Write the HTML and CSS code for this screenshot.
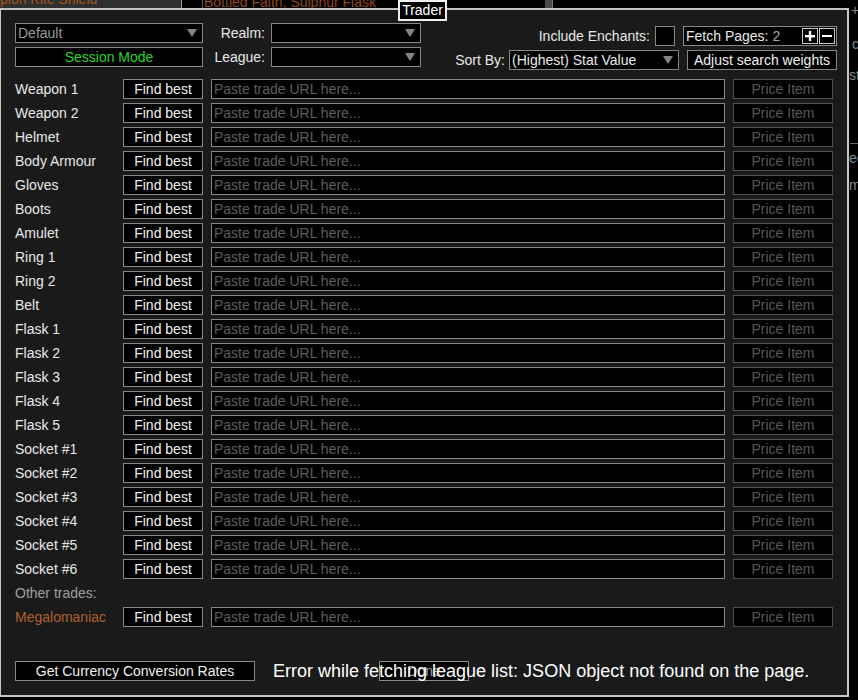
FILE: index.html
```html
<!DOCTYPE html>
<html>
<head>
<meta charset="utf-8">
<title>Trader</title>
<link rel="stylesheet" href="styles.css">
</head>
<body>
<div class="backdrop">
  <div class="bg-shield"><span>pion Kite Shield</span></div>
  <div class="bg-vline"></div>
  <div class="bg-flask">Bottled Faith, Sulphur Flask</div>
  <div class="bg-thumb"></div>
  <div class="bg-frag f1">+V</div>
  <div class="bg-frag f2">c</div>
  <div class="bg-frag f3">st</div>
  <div class="bg-hline"></div>
  <div class="bg-frag f4">ee</div>
  <div class="bg-frag f5">m</div>
</div>

<div class="dialog">
  <div class="title">Trader</div>

  <div class="top">
    <div class="top-left">
      <div class="dropdown"><span class="dd-text muted">Default</span><svg class="tri" viewBox="0 0 10 8"><polygon points="0,0 10,0 5,8"/></svg></div>
      <div class="lbl">Realm:</div>
      <div class="dropdown"><span class="dd-text"></span><svg class="tri" viewBox="0 0 10 8"><polygon points="0,0 10,0 5,8"/></svg></div>
      <div class="btn session">Session Mode</div>
      <div class="lbl">League:</div>
      <div class="dropdown"><span class="dd-text"></span><svg class="tri" viewBox="0 0 10 8"><polygon points="0,0 10,0 5,8"/></svg></div>
    </div>
    <div class="top-right">
      <div class="tr-row">
        <span class="lbl-inline">Include Enchants:</span>
        <div class="checkbox"></div>
        <div class="fetch">
          <span class="fetch-text">Fetch Pages: <span class="fetch-num">2</span></span>
          <div class="pm"><svg viewBox="0 0 14 14"><rect x="2" y="6" width="10" height="2.4"/><rect x="5.8" y="2" width="2.4" height="10"/></svg></div>
          <div class="pm"><svg viewBox="0 0 14 14"><rect x="2" y="6" width="10" height="2"/></svg></div>
        </div>
      </div>
      <div class="tr-row">
        <span class="lbl-inline sort">Sort By:</span>
        <div class="dropdown sortdd"><span class="dd-text">(Highest) Stat Value</span><svg class="tri" viewBox="0 0 10 8"><polygon points="0,0 10,0 5,8"/></svg></div>
        <div class="btn adjust">Adjust search weights</div>
      </div>
    </div>
  </div>

  <div class="rows">
    <div class="row"><span class="slot">Weapon 1</span><div class="btn find">Find best</div><div class="url">Paste trade URL here...</div><div class="btn price">Price Item</div></div>
    <div class="row"><span class="slot">Weapon 2</span><div class="btn find">Find best</div><div class="url">Paste trade URL here...</div><div class="btn price">Price Item</div></div>
    <div class="row"><span class="slot">Helmet</span><div class="btn find">Find best</div><div class="url">Paste trade URL here...</div><div class="btn price">Price Item</div></div>
    <div class="row"><span class="slot">Body Armour</span><div class="btn find">Find best</div><div class="url">Paste trade URL here...</div><div class="btn price">Price Item</div></div>
    <div class="row"><span class="slot">Gloves</span><div class="btn find">Find best</div><div class="url">Paste trade URL here...</div><div class="btn price">Price Item</div></div>
    <div class="row"><span class="slot">Boots</span><div class="btn find">Find best</div><div class="url">Paste trade URL here...</div><div class="btn price">Price Item</div></div>
    <div class="row"><span class="slot">Amulet</span><div class="btn find">Find best</div><div class="url">Paste trade URL here...</div><div class="btn price">Price Item</div></div>
    <div class="row"><span class="slot">Ring 1</span><div class="btn find">Find best</div><div class="url">Paste trade URL here...</div><div class="btn price">Price Item</div></div>
    <div class="row"><span class="slot">Ring 2</span><div class="btn find">Find best</div><div class="url">Paste trade URL here...</div><div class="btn price">Price Item</div></div>
    <div class="row"><span class="slot">Belt</span><div class="btn find">Find best</div><div class="url">Paste trade URL here...</div><div class="btn price">Price Item</div></div>
    <div class="row"><span class="slot">Flask 1</span><div class="btn find">Find best</div><div class="url">Paste trade URL here...</div><div class="btn price">Price Item</div></div>
    <div class="row"><span class="slot">Flask 2</span><div class="btn find">Find best</div><div class="url">Paste trade URL here...</div><div class="btn price">Price Item</div></div>
    <div class="row"><span class="slot">Flask 3</span><div class="btn find">Find best</div><div class="url">Paste trade URL here...</div><div class="btn price">Price Item</div></div>
    <div class="row"><span class="slot">Flask 4</span><div class="btn find">Find best</div><div class="url">Paste trade URL here...</div><div class="btn price">Price Item</div></div>
    <div class="row"><span class="slot">Flask 5</span><div class="btn find">Find best</div><div class="url">Paste trade URL here...</div><div class="btn price">Price Item</div></div>
    <div class="row"><span class="slot">Socket #1</span><div class="btn find">Find best</div><div class="url">Paste trade URL here...</div><div class="btn price">Price Item</div></div>
    <div class="row"><span class="slot">Socket #2</span><div class="btn find">Find best</div><div class="url">Paste trade URL here...</div><div class="btn price">Price Item</div></div>
    <div class="row"><span class="slot">Socket #3</span><div class="btn find">Find best</div><div class="url">Paste trade URL here...</div><div class="btn price">Price Item</div></div>
    <div class="row"><span class="slot">Socket #4</span><div class="btn find">Find best</div><div class="url">Paste trade URL here...</div><div class="btn price">Price Item</div></div>
    <div class="row"><span class="slot">Socket #5</span><div class="btn find">Find best</div><div class="url">Paste trade URL here...</div><div class="btn price">Price Item</div></div>
    <div class="row"><span class="slot">Socket #6</span><div class="btn find">Find best</div><div class="url">Paste trade URL here...</div><div class="btn price">Price Item</div></div>
    <div class="row"><span class="slot other">Other trades:</span></div>
    <div class="row"><span class="slot unique">Megalomaniac</span><div class="btn find">Find best</div><div class="url">Paste trade URL here...</div><div class="btn price">Price Item</div></div>
  </div>

  <div class="bottom">
    <div class="btn currency">Get Currency Conversion Rates</div>
    <div class="btn done">Done</div>
    <div class="error">Error while fetching league list: JSON object not found on the page.</div>
  </div>
</div>
</body>
</html>
```

FILE: styles.css
```css
* { box-sizing: border-box; }
html, body {
  margin: 0;
  padding: 0;
  background: #000;
  width: 858px;
  height: 700px;
  overflow: hidden;
}
body {
  position: relative;
  font-family: "Liberation Sans", Arial, sans-serif;
  font-size: 14px;
  color: #e8e8e8;
}

/* backdrop (application behind the popup) */
.backdrop { position: absolute; left: 0; top: 0; width: 858px; height: 700px; }
.bg-shield {
  position: absolute; left: 0; top: 0; width: 182px; height: 8px;
  background: #2f2f2f; border-right: 1px solid #9a9a9a; overflow: hidden;
}
.bg-shield span { position: absolute; left: 0; top: -9px; color: #a5531c; white-space: nowrap; }
.bg-vline { position: absolute; left: 202px; top: 0; width: 1px; height: 8px; background: #555; }
.bg-flask { position: absolute; left: 204px; top: -6px; color: #8f4716; white-space: nowrap; }
.bg-thumb { position: absolute; left: 545px; top: 0; width: 8px; height: 8px; background: #4a4a4a; border-right: 1px solid #777; }
.bg-frag { position: absolute; left: 851px; color: #8a8a8a; white-space: nowrap; }
.f1 { top: 2px; }
.f2 { top: 36px; left: 852px; }
.f3 { top: 67px; left: 849px; }
.f4 { top: 150px; left: 849px; }
.f5 { top: 177px; left: 849px; }
.bg-hline { position: absolute; left: 850px; top: 143px; width: 8px; height: 1px; background: #666; }

/* popup */
.dialog {
  position: absolute;
  left: -1px; top: 8px;
  width: 850px; height: 689px;
  background: #1a1a1a;
  border: 2px solid #c4c4c4;
  padding: 13px 10px 0 14px;
}
.title {
  position: absolute;
  left: 397px; top: -10px;
  width: 49px; height: 21px;
  background: #000;
  border: 2px solid #f0f0f0;
  color: #fff;
  text-align: center;
  line-height: 16px;
}

.btn, .dropdown, .url, .checkbox, .fetch {
  height: 20px;
  background: #000;
  border: 1px solid #858585;
  line-height: 18px;
  white-space: nowrap;
  overflow: hidden;
}
.btn { text-align: center; color: #f0f0f0; }

.top { display: flex; justify-content: space-between; align-items: flex-start; height: 44px; }
.top-left {
  display: grid;
  grid-template-columns: 188px 68px 150px;
  row-gap: 4px;
  align-items: center;
}
.lbl { text-align: right; padding-right: 6px; color: #e8e8e8; }
.dropdown { display: flex; align-items: center; padding-left: 2px; padding-right: 5px; }
.dd-text { flex: 1; color: #e8e8e8; }
.dd-text.muted { color: #9a9a9a; }
.tri { width: 10px; height: 8px; fill: #858585; flex: none; }
.session { color: #2bd42b; }

.top-right { display: flex; flex-direction: column; gap: 4px; margin-top: 3px; }
.tr-row { display: flex; justify-content: flex-end; align-items: center; }
.lbl-inline { margin-right: 5px; }
.lbl-inline.sort { margin-right: 4px; }
.checkbox { width: 20px; margin-right: 8px; }
.fetch { width: 154px; display: flex; align-items: center; padding: 0 1px 0 2px; }
.fetch-text { flex: 1; color: #e8e8e8; }
.fetch-num { color: #a8a8a8; }
.pm {
  width: 16px; height: 16px; margin-left: 1px;
  border: 1px solid #c8c8c8; background: #000;
  display: flex; align-items: center; justify-content: center;
}
.pm svg { width: 14px; height: 14px; fill: #fff; }
.sortdd { width: 170px; margin-right: 8px; }
.adjust { width: 150px; }

.rows { display: flex; flex-direction: column; gap: 4px; margin-top: 12px; }
.row { display: flex; align-items: center; height: 20px; }
.slot { width: 108px; flex: none; color: #e8e8e8; white-space: nowrap; }
.slot.other { color: #a0a0a0; }
.slot.unique { color: #b0602a; }
.find { width: 80px; flex: none; }
.url { width: 514px; flex: none; margin-left: 8px; color: #5e5e5e; padding-left: 2px; }
.price { width: 100px; flex: none; margin-left: 8px; border-color: #4e4e4e; color: #585858; }

.bottom { position: relative; display: flex; align-items: center; margin-top: 34px; height: 20px; }
.currency { width: 240px; flex: none; }
.done {
  position: absolute; left: 364px; top: 0;
  width: 90px; color: #a0a0a0; border-color: #8a8a8a;
}
.error {
  position: relative;
  margin-left: 18px;
  font-size: 18px;
  color: #fff;
  white-space: nowrap;
}
```
